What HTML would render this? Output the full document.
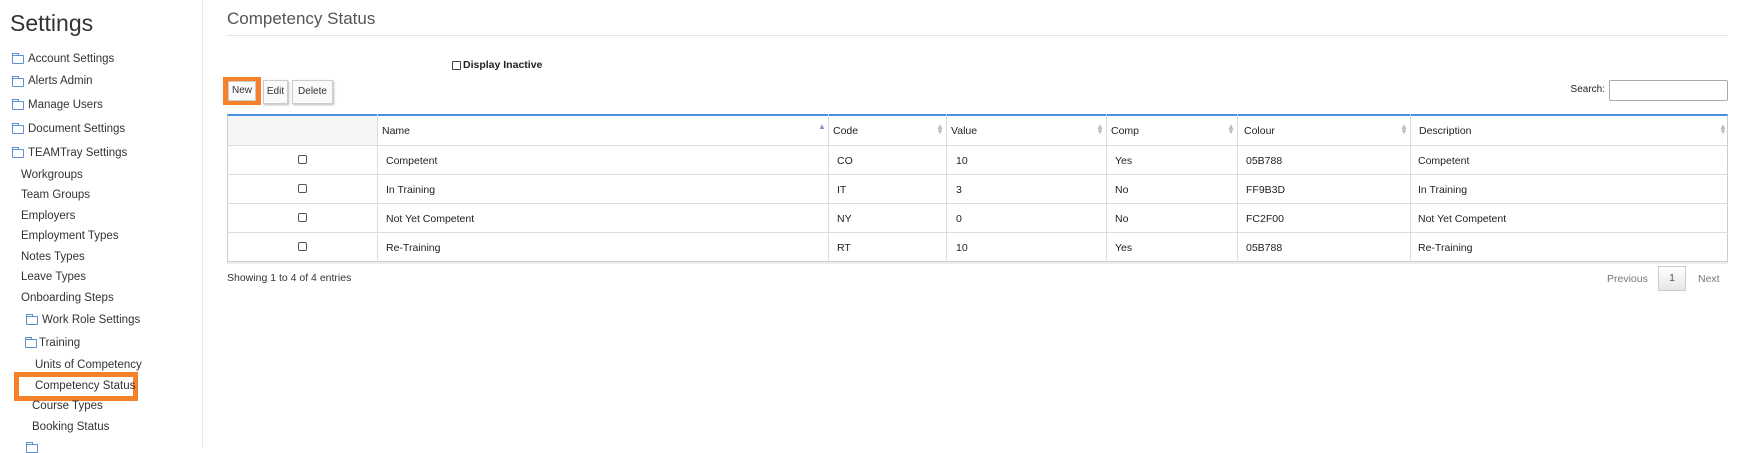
<!DOCTYPE html>
<html><head><meta charset="utf-8"><style>
*{margin:0;padding:0;box-sizing:border-box}
body{width:1739px;height:447px;overflow:hidden;background:#fff;font-family:"Liberation Sans",sans-serif;color:#333;position:relative}
.a{position:absolute;white-space:nowrap}
.sb{position:absolute;left:0;top:0;width:203px;height:447px;border-right:1px solid #e6e6e6}
.nav{font-size:11.5px;color:#333}
.fold{position:absolute;width:12px;height:9px;border:1px solid #5b8fd0;border-radius:1px}
.fold:before{content:"";position:absolute;left:-1px;top:-3px;width:5px;height:2px;border:1px solid #5b8fd0;border-bottom:none}
.btn{position:absolute;top:80px;height:24px;border:1px solid #ccc;background:#fafafa;font-size:10px;line-height:22px;text-align:center;box-shadow:1px 1px 2px #bbb}
.cell{position:absolute;font-size:10.5px;color:#222}
.hl{position:absolute;left:227px;width:1501px;height:1px;background:#ddd}
.vl{position:absolute;top:114px;height:148px;width:1px;background:#ddd}
.cb{position:absolute;width:9px;height:9px;border:1px solid #555;border-radius:2px;left:298px}
.sort{position:absolute;top:124px;font-size:8px;color:#bbb;line-height:5px}
</style></head><body>
<div class="sb"></div>
<div class="a" style="left:10px;top:10px;font-size:23px;color:#333">Settings</div>
<div class="fold" style="left:12px;top:55px"></div><div class="a nav" style="left:28px;top:53px">Account Settings</div>
<div class="fold" style="left:12px;top:78px"></div><div class="a nav" style="left:28px;top:75px">Alerts Admin</div>
<div class="fold" style="left:12px;top:101px"></div><div class="a nav" style="left:28px;top:99px">Manage Users</div>
<div class="fold" style="left:12px;top:125px"></div><div class="a nav" style="left:28px;top:123px">Document Settings</div>
<div class="fold" style="left:12px;top:149px"></div><div class="a nav" style="left:28px;top:147px">TEAMTray Settings</div>
<div class="a nav" style="left:21px;top:169px">Workgroups</div>
<div class="a nav" style="left:21px;top:189px">Team Groups</div>
<div class="a nav" style="left:21px;top:210px">Employers</div>
<div class="a nav" style="left:21px;top:230px">Employment Types</div>
<div class="a nav" style="left:21px;top:251px">Notes Types</div>
<div class="a nav" style="left:21px;top:271px">Leave Types</div>
<div class="a nav" style="left:21px;top:292px">Onboarding Steps</div>
<div class="fold" style="left:26px;top:316px"></div><div class="a nav" style="left:42px;top:314px">Work Role Settings</div>
<div class="fold" style="left:25px;top:339px"></div><div class="a nav" style="left:39px;top:337px">Training</div>
<div class="a nav" style="left:35px;top:359px">Units of Competency</div>
<div class="a" style="left:14px;top:372px;width:124px;height:29px;border:5px solid #f5812a"></div>
<div class="a nav" style="left:35px;top:380px">Competency Status</div>
<div class="a nav" style="left:32px;top:400px">Course Types</div>
<div class="a nav" style="left:32px;top:421px">Booking Status</div>
<div class="fold" style="left:26px;top:444px"></div>

<div class="a" style="left:227px;top:9px;font-size:17px;color:#555">Competency Status</div>
<div class="a" style="left:227px;top:35px;width:1501px;height:1px;background:#e5e5e5"></div>
<div class="a" style="left:452px;top:61px;width:9px;height:9px;border:1px solid #444;border-radius:1px"></div>
<div class="a" style="left:463px;top:59px;font-size:10.5px;font-weight:bold;color:#222">Display Inactive</div>

<div class="a" style="left:223px;top:77px;width:38px;height:28px;background:#f5812a"></div>
<div class="btn" style="left:228px;top:81px;width:28px;height:20px;line-height:18px;box-shadow:none">New</div>
<div class="btn" style="left:263px;width:25px">Edit</div>
<div class="btn" style="left:292px;width:41px">Delete</div>

<div class="a" style="left:1570px;top:84px;width:35px;text-align:right;font-size:10px;color:#222">Search:</div>
<div class="a" style="left:1609px;top:80px;width:119px;height:21px;border:1px solid #aaa;border-radius:2px"></div>

<div class="a" style="left:227px;top:114px;width:1501px;height:148px;border:1px solid #ccc;border-top:2px solid #4a90e2"></div>
<div class="a" style="left:228px;top:116px;width:149px;height:29px;background:#f5f5f5"></div>
<div class="hl" style="top:145px"></div><div class="hl" style="top:174px"></div><div class="hl" style="top:203px"></div><div class="hl" style="top:232px"></div>
<div class="a" style="left:227px;top:262px;width:1501px;height:2px;background:#eee"></div>
<div class="vl" style="left:377px"></div><div class="vl" style="left:828px"></div><div class="vl" style="left:946px"></div><div class="vl" style="left:1106px"></div><div class="vl" style="left:1237px"></div><div class="vl" style="left:1410px"></div>

<div class="cell" style="left:382px;top:125px">Name</div>
<div class="cell" style="left:833px;top:125px">Code</div>
<div class="cell" style="left:951px;top:125px">Value</div>
<div class="cell" style="left:1111px;top:125px">Comp</div>
<div class="cell" style="left:1244px;top:125px">Colour</div>
<div class="cell" style="left:1419px;top:125px">Description</div>
<div class="sort" style="left:818px;color:#8a8ad6">▲</div>
<div class="sort" style="left:936px">▲<br>▼</div>
<div class="sort" style="left:1096px">▲<br>▼</div>
<div class="sort" style="left:1227px">▲<br>▼</div>
<div class="sort" style="left:1400px">▲<br>▼</div>
<div class="sort" style="left:1719px">▲<br>▼</div>

<div class="cb" style="top:155px"></div><div class="cb" style="top:184px"></div><div class="cb" style="top:213px"></div><div class="cb" style="top:242px"></div>

<div class="cell" style="left:386px;top:155px">Competent</div><div class="cell" style="left:837px;top:155px">CO</div><div class="cell" style="left:956px;top:155px">10</div><div class="cell" style="left:1115px;top:155px">Yes</div><div class="cell" style="left:1246px;top:155px">05B788</div><div class="cell" style="left:1418px;top:155px">Competent</div>
<div class="cell" style="left:386px;top:184px">In Training</div><div class="cell" style="left:837px;top:184px">IT</div><div class="cell" style="left:956px;top:184px">3</div><div class="cell" style="left:1115px;top:184px">No</div><div class="cell" style="left:1246px;top:184px">FF9B3D</div><div class="cell" style="left:1418px;top:184px">In Training</div>
<div class="cell" style="left:386px;top:213px">Not Yet Competent</div><div class="cell" style="left:837px;top:213px">NY</div><div class="cell" style="left:956px;top:213px">0</div><div class="cell" style="left:1115px;top:213px">No</div><div class="cell" style="left:1246px;top:213px">FC2F00</div><div class="cell" style="left:1418px;top:213px">Not Yet Competent</div>
<div class="cell" style="left:386px;top:242px">Re-Training</div><div class="cell" style="left:837px;top:242px">RT</div><div class="cell" style="left:956px;top:242px">10</div><div class="cell" style="left:1115px;top:242px">Yes</div><div class="cell" style="left:1246px;top:242px">05B788</div><div class="cell" style="left:1418px;top:242px">Re-Training</div>

<div class="a" style="left:227px;top:272px;font-size:10.5px;color:#333">Showing 1 to 4 of 4 entries</div>
<div class="a" style="left:1607px;top:273px;font-size:10.5px;color:#777">Previous</div>
<div class="a" style="left:1658px;top:266px;width:28px;height:25px;border:1px solid #ccc;background:linear-gradient(#fff,#e6e6e6);font-size:10.5px;color:#555;text-align:center;line-height:23px">1</div>
<div class="a" style="left:1698px;top:273px;font-size:10.5px;color:#777">Next</div>
</body></html>
